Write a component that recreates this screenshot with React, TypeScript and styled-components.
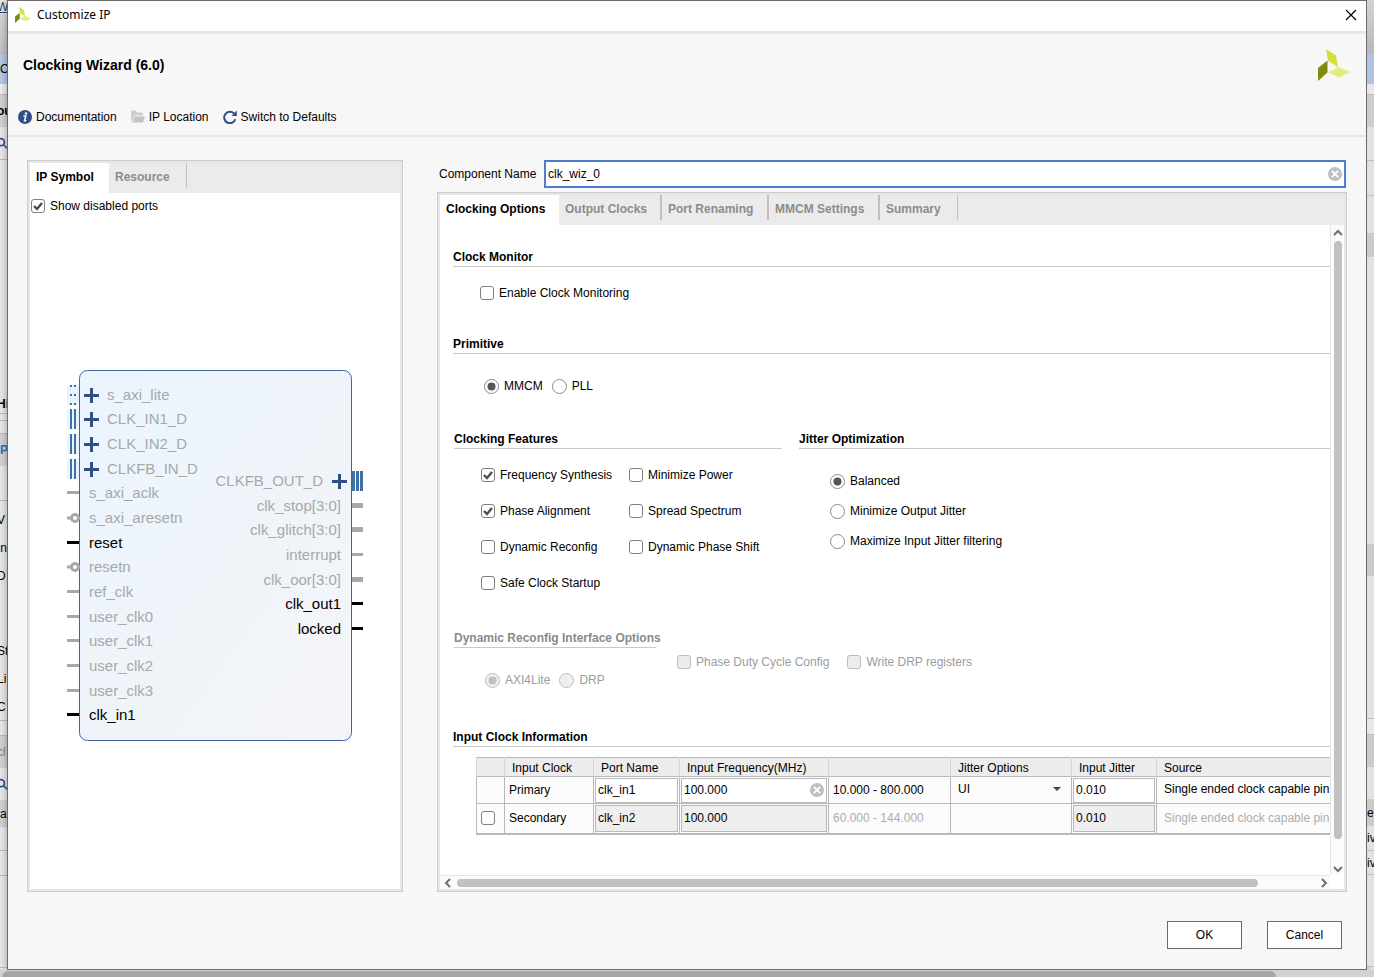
import React, { useState } from 'react';
import styled, { createGlobalStyle, css } from 'styled-components';

const GlobalStyle = createGlobalStyle`
  * { box-sizing: border-box; }
  body {
    margin: 0;
    background: #e4e4e4;
    color: #000;
    font: 12px/18px "Liberation Sans", Arial, sans-serif;
  }
  button, input, select { font: inherit; color: inherit; }
`;

/* ---------- window behind the dialog ---------- */

const Desktop = styled.div`
  display: grid;
  grid-template-columns: 7px minmax(0, 1fr) 7px;
  grid-template-rows: 1fr 7px;
  min-height: 100vh;
  overflow: hidden;
`;

const Strip = styled.div`
  display: flex;
  flex-direction: column;
  min-width: 0;
  overflow: hidden;
`;

const BandBox = styled.div<{
  $h: number;
  $bg?: string;
  $line?: boolean;
  $bold?: boolean;
  $color?: string;
  $cut?: boolean;
  $link?: boolean;
}>`
  display: flex;
  align-items: center;
  flex: none;
  height: ${(p) => p.$h}px;
  overflow: hidden;
  white-space: nowrap;
  text-indent: ${(p) => (p.$cut ? -3 : 0)}px;
  text-decoration: ${(p) => (p.$link ? 'underline' : 'none')};
  background: ${(p) => p.$bg || '#e9e9e9'};
  border-bottom: ${(p) => (p.$line ? '1px solid #bdbdbd' : '0')};
  font-weight: ${(p) => (p.$bold ? 700 : 400)};
  color: ${(p) => p.$color || '#000'};
`;

const BottomStrip = styled.div`
  grid-column: 1 / -1;
  padding: 1px 98px 0 2px;
  background: #d2d2d2;
  overflow: hidden;
`;

const BottomThumb = styled.div`
  height: 12px;
  border-radius: 6px;
  background: #a6a6a6;
`;

type Band = {
  h: number;
  bg?: string;
  line?: boolean;
  text?: string;
  bold?: boolean;
  color?: string;
  icon?: boolean;
  cut?: boolean;
  link?: boolean;
};

const grey = '#d3d3d3';

const leftBands: Band[] = [
  { h: 14, text: 'W', color: '#2a3f6b', cut: true, link: true },
  { h: 40, bg: 'linear-gradient(#d6d6d6, #c2c2c2)', line: true },
  { h: 30, bg: '#b9c9e6', text: 'C' },
  { h: 11, bg: '#efefef', line: true },
  { h: 32, bg: grey, text: 'ou', bold: true, cut: true },
  { h: 33, icon: true, line: true },
  { h: 234 },
  { h: 20, text: 'Hi', bold: true, line: true, cut: true },
  { h: 7, line: true },
  { h: 13, line: true },
  { h: 32, bg: grey, text: 'P', bold: true, color: '#2a70b8' },
  { h: 35, line: true },
  { h: 5 },
  { h: 28, text: 'V', cut: true },
  { h: 28, text: 'In', cut: true },
  { h: 28, text: 'D', cut: true },
  { h: 47 },
  { h: 28, text: 'St', cut: true },
  { h: 28, text: 'Li', cut: true },
  { h: 28, text: 'C', cut: true, line: true },
  { h: 15, line: true },
  { h: 32, bg: grey, text: 'cl', color: '#888', cut: true },
  { h: 32, icon: true },
  { h: 27, bg: grey, text: 'a' },
  { h: 24, line: true },
  { h: 25, line: true },
  { h: 92, line: true },
];

const rightBands: Band[] = [
  { h: 54, bg: 'linear-gradient(#d4d4d4, #b8b8b8)', line: true },
  { h: 30, bg: '#b0c2e2' },
  { h: 11, bg: '#e8e8e8', line: true },
  { h: 32, bg: '#cdcdcd' },
  { h: 34, bg: '#e2e2e2', line: true },
  { h: 35, bg: '#e2e2e2', line: true },
  { h: 37, bg: '#e2e2e2' },
  { h: 24, bg: '#cbcbcb' },
  { h: 287, bg: '#e2e2e2' },
  { h: 32, bg: '#cbcbcb' },
  { h: 143, bg: '#e2e2e2', line: true },
  { h: 16, bg: '#e9e9e9', line: true },
  { h: 32, bg: '#cbcbcb' },
  { h: 32, bg: '#e2e2e2' },
  { h: 27, bg: '#cbcbcb', text: 'e' },
  { h: 25, bg: '#e2e2e2', text: 'iv', line: true },
  { h: 24, bg: '#e2e2e2', text: 'iv', line: true },
  { h: 92, bg: '#e2e2e2', line: true },
];

const SearchGlyph = () => (
  <svg width="8" height="14" viewBox="0 0 8 14" aria-hidden="true">
    <circle cx="1" cy="6" r="4" fill="none" stroke="#34548a" strokeWidth="2" />
    <path d="M4 9l4 4" stroke="#34548a" strokeWidth="2" />
  </svg>
);

const Bands = ({ items }: { items: Band[] }) => (
  <Strip>
    {items.map((b, i) => (
      <BandBox key={i} $h={b.h} $bg={b.bg} $line={b.line} $bold={b.bold} $color={b.color} $cut={b.cut} $link={b.link}>
        {b.icon ? <SearchGlyph /> : b.text}
      </BandBox>
    ))}
  </Strip>
);

/* ---------- dialog frame ---------- */

const Dialog = styled.main`
  display: flex;
  flex-direction: column;
  min-width: 0;
  background: #f7f7f7;
  border: 1px solid #6c6c6c;
  box-shadow: 0 0 8px rgba(0, 0, 0, 0.35);
`;

const TitleBar = styled.div`
  display: flex;
  align-items: center;
  gap: 6px;
  height: 33px;
  padding: 0 7px 2px;
  background: #fff;
  border-bottom: 3px solid #e6e6e6;
  font-family: "Noto Sans", "Open Sans", sans-serif;
`;

const CloseButton = styled.button`
  display: flex;
  margin-left: auto;
  padding: 2px;
  border: 0;
  background: none;
`;

const Header = styled.header`
  padding: 15px 16px 8px 10px;
  border-bottom: 2px solid #e6e6e6;
`;

const HeaderTop = styled.div`
  display: flex;
  align-items: center;
  justify-content: space-between;
  padding-left: 5px;
`;

const Title = styled.h1`
  margin: 0;
  font-size: 14px;
  font-weight: 700;
`;

const Toolbar = styled.div`
  display: flex;
  gap: 14px;
  margin-top: 26px;
`;

const ToolButton = styled.button`
  display: flex;
  align-items: center;
  gap: 4px;
  height: 20px;
  padding: 0;
  border: 0;
  background: none;
`;

const Body = styled.div`
  display: flex;
  flex: 1;
  gap: 34px;
  padding: 23px 19px 0;
`;

const Footer = styled.footer`
  display: flex;
  justify-content: flex-end;
  gap: 25px;
  padding: 29px 24px 20px;
`;

const DialogButton = styled.button`
  width: 75px;
  height: 28px;
  padding: 0;
  border: 1px solid #6a6a6a;
  background: #fff;
`;

/* ---------- panels and tabs ---------- */

const Panel = styled.section`
  display: flex;
  flex-direction: column;
  min-width: 0;
  padding: 2px;
  border: 1px solid #cdcdcd;
  background: #e6e6e6;
`;

const SymbolPanel = styled(Panel)`
  flex: 0 0 376px;
`;

const OptionsPanel = styled(Panel)`
  flex: 1;
`;

const PanelFill = styled.div`
  flex: 1;
  min-width: 0;
  background: #fff;
`;

const TabBar = styled.div`
  display: flex;
  height: 30px;
  background: #ebebeb;
`;

const Tab = styled.button<{ $w: number; $active?: boolean; $rule?: number }>`
  width: ${(p) => p.$w}px;
  height: 25px;
  padding: 2px 0 0 6px;
  border: 0;
  border-right: ${(p) => p.$rule || 0}px solid #c0c0c0;
  background: none;
  color: #8c8c8c;
  font-weight: 700;
  text-align: left;
  white-space: nowrap;
  ${(p) =>
    p.$active &&
    css`
      height: 30px;
      padding-bottom: 5px;
      background: #fff;
      color: #000;
    `}
`;

const PortsToggle = styled.div`
  display: flex;
  padding: 4px 1px;
`;

const SymbolArt = styled.svg`
  display: block;
  margin: 151px 0 0 37px;
  font-size: 15px;
`;

const RightColumn = styled.div`
  display: flex;
  flex: 1;
  flex-direction: column;
  min-width: 0;
  gap: 4px;
`;

const NameRow = styled.div`
  display: flex;
  align-items: center;
  padding: 0 1px 0 2px;
`;

const NameLabel = styled.label`
  width: 105px;
`;

const NameField = styled.div`
  display: flex;
  flex: 1;
  align-items: center;
  height: 28px;
  padding-right: 2px;
  border: 2px solid #4f7bd0;
  background: #fff;
`;

const PlainInput = styled.input`
  flex: 1;
  min-width: 0;
  padding: 0 2px;
  border: 0;
  outline: 0;
  background: none;
`;

const ClearButton = styled.button`
  display: flex;
  padding: 0;
  border: 0;
  background: none;
`;

/* ---------- scroll frame ---------- */

const ScrollFrame = styled.div`
  display: grid;
  flex: 1;
  grid-template-columns: minmax(0, 1fr) 13px;
  grid-template-rows: 1fr 14px;
  padding-right: 1px;
  background: #fff;
`;

const Viewport = styled.div`
  overflow: hidden;
  padding: 23px 0 0 13px;
`;

const VBar = styled.div`
  display: flex;
  flex-direction: column;
  align-items: center;
  justify-content: space-between;
  padding: 4px 0 2px 1px;
  border-left: 1px solid #e6e6e6;
  background: #fbfbfb;
`;

const HBar = styled.div`
  display: flex;
  align-items: center;
  padding: 0 2px 0 4px;
  border-top: 1px solid #e6e6e6;
  background: #fbfbfb;
`;

const VThumb = styled.div`
  flex: 1;
  width: 8px;
  margin: 5px 0 27px;
  border-radius: 4px;
  background: #c1c1c1;
`;

const HThumb = styled.div`
  flex: 1;
  height: 8px;
  margin: 0 63px 0 6px;
  border-radius: 4px;
  background: #c1c1c1;
`;

/* ---------- form parts ---------- */

const Group = styled.section<{ $top?: number; $width?: number }>`
  margin-top: ${(p) => p.$top || 0}px;
  ${(p) => p.$width && `width: ${p.$width}px;`}
`;

const GroupTitle = styled.h2<{ $dim?: boolean }>`
  height: 19px;
  margin: 0;
  border-bottom: 1px solid #c9c9c9;
  color: ${(p) => (p.$dim ? '#8a8a8a' : '#000')};
  font-size: 12px;
  font-weight: 700;
  line-height: 18px;
  white-space: nowrap;
`;

const Columns = styled.div<{ $top: number; $gap: number }>`
  display: flex;
  align-items: flex-start;
  gap: ${(p) => p.$gap}px;
  margin-top: ${(p) => p.$top}px;
  padding-left: 1px;
`;

const Grow = styled.section`
  flex: 1;
  min-width: 0;
`;

const Row = styled.div<{ $top?: number; $left?: number; $gap?: number }>`
  display: flex;
  align-items: center;
  gap: ${(p) => p.$gap || 0}px;
  height: 36px;
  margin-top: ${(p) => p.$top || 0}px;
  padding-left: ${(p) => p.$left || 0}px;
`;

const FeatureGrid = styled.div`
  display: grid;
  grid-template-columns: 148px auto;
  grid-auto-rows: 36px;
  align-items: center;
  padding: 8px 0 0 27px;
`;

const RadioStack = styled.div`
  display: grid;
  grid-auto-rows: 30px;
  align-items: center;
  padding: 17px 0 0 31px;
`;

const ChoiceLabel = styled.label<{ $dim?: boolean }>`
  display: inline-flex;
  align-items: center;
  gap: 5px;
  color: ${(p) => (p.$dim ? '#9c9c9c' : '#000')};
  white-space: nowrap;
`;

const Mark = styled.span`
  display: grid;
  > * { grid-area: 1 / 1; }
  > svg { visibility: hidden; pointer-events: none; }
  > input:checked + svg { visibility: visible; }
`;

const CheckInput = styled.input`
  appearance: none;
  width: 14px;
  height: 14px;
  margin: 0;
  border: 1px solid #808080;
  border-radius: 3px;
  background: #fff;
  &:disabled { border-color: #bcbcbc; background: #ececec; }
`;

const RadioInput = styled.input`
  appearance: none;
  width: 15px;
  height: 15px;
  margin: 0;
  border: 1px solid #8a8a8a;
  border-radius: 50%;
  background: #fff;
  & + svg { color: #555; }
  &:disabled { border-color: #bcbcbc; background: #efefef; }
  &:disabled + svg { color: #c0c0c0; }
`;

type ChoiceProps = { label: string; on?: boolean; disabled?: boolean };

const Check = ({ label, on, disabled }: ChoiceProps) => (
  <ChoiceLabel $dim={disabled}>
    <Mark>
      <CheckInput type="checkbox" defaultChecked={on} disabled={disabled} />
      <svg width="14" height="14" viewBox="0 0 14 14" aria-hidden="true">
        <path d="M3 7l3 3 5-6" fill="none" stroke="#4d4d4d" strokeWidth="2.4" />
      </svg>
    </Mark>
    {label}
  </ChoiceLabel>
);

const Radio = ({ label, on, disabled, name }: ChoiceProps & { name: string }) => (
  <ChoiceLabel $dim={disabled}>
    <Mark>
      <RadioInput type="radio" name={name} defaultChecked={on} disabled={disabled} />
      <svg width="15" height="15" viewBox="0 0 15 15" aria-hidden="true">
        <circle cx="7.5" cy="7.5" r="4" fill="currentColor" />
      </svg>
    </Mark>
    {label}
  </ChoiceLabel>
);

/* ---------- clock table ---------- */

const ClockTable = styled.table`
  width: 946px;
  margin: 10px 0 0 23px;
  border-collapse: collapse;
  border: 1px solid #b9b9b9;
  border-bottom-width: 2px;
  table-layout: fixed;
`;

const HeadCell = styled.th`
  height: 18px;
  padding: 3px 0 0 7px;
  border: solid #d6d6d6;
  border-width: 0 1px;
  background: #ececec;
  font-weight: 400;
  line-height: 15px;
  text-align: left;
  white-space: nowrap;
`;

const Cell = styled.td<{ $pad?: number; $dim?: boolean; $raise?: boolean }>`
  padding: 0 0 0 ${(p) => (p.$pad === undefined ? 4 : p.$pad)}px;
  border: 1px solid #b9b9b9;
  background: #fcfcfc;
  color: ${(p) => (p.$dim ? '#adadad' : '#000')};
  white-space: nowrap;
  ${(p) => p.$raise && 'padding-bottom: 3px;'}
`;

const BodyRow = styled.tr<{ $h: number }>`
  height: ${(p) => p.$h}px;
`;

const CellField = styled.div<{ $off?: boolean }>`
  display: flex;
  align-items: center;
  height: ${(p) => (p.$off ? 27 : 25)}px;
  margin: 0 1px;
  padding-right: 2px;
  border: 1px solid #b9b9b9;
  background: ${(p) => (p.$off ? '#eee' : '#fff')};
  input:disabled { color: #000; }
`;

const JitterBox = styled.div`
  display: flex;
  align-items: center;
  padding-right: 10px;
  margin-bottom: 3px;
`;

const JitterSelect = styled.select`
  appearance: none;
  flex: 1;
  padding: 0;
  border: 0;
  outline: 0;
  background: none;
`;

const ClearIcon = () => (
  <svg width="14" height="14" viewBox="0 0 14 14" aria-hidden="true">
    <circle cx="7" cy="7" r="7" fill="#bfbfbf" />
    <path d="M3.8 3.8l6.4 6.4M10.2 3.8l-6.4 6.4" stroke="#fff" strokeWidth="1.8" />
  </svg>
);

const Chevron = ({ d, w, h }: { d: string; w: number; h: number }) => (
  <svg width={w} height={h} viewBox={`0 0 ${w} ${h}`} aria-hidden="true">
    <path d={d} fill="none" stroke="#707070" strokeWidth="2" />
  </svg>
);

const Logo = ({ size }: { size: number }) => (
  <svg width={size} height={size} viewBox="0 0 32 32" aria-hidden="true">
    <path d="M8 0l10 6.500 2 12L10 11.500z" fill="#d4e03a" />
    <path d="M0 19l9.500-7.500v12L0 32z" fill="#808a0c" />
    <path d="M10 23.500l10.500-5.500L32 23l-10.500 5.500z" fill="#e4eb80" />
  </svg>
);

/* ---------- IP block symbol ---------- */

type Port = { y: number; name: string; kind?: 'dots' | 'bars' | 'inv' | 'bus'; on?: boolean };

const leftPorts: Port[] = [
  { y: 25, name: 's_axi_lite', kind: 'dots' },
  { y: 49, name: 'CLK_IN1_D', kind: 'bars' },
  { y: 74, name: 'CLK_IN2_D', kind: 'bars' },
  { y: 99, name: 'CLKFB_IN_D', kind: 'bars' },
  { y: 123, name: 's_axi_aclk' },
  { y: 148, name: 's_axi_aresetn', kind: 'inv' },
  { y: 173, name: 'reset', on: true },
  { y: 197, name: 'resetn', kind: 'inv' },
  { y: 222, name: 'ref_clk' },
  { y: 247, name: 'user_clk0' },
  { y: 271, name: 'user_clk1' },
  { y: 296, name: 'user_clk2' },
  { y: 321, name: 'user_clk3' },
  { y: 345, name: 'clk_in1', on: true },
];

const rightPorts: Port[] = [
  { y: 111, name: 'CLKFB_OUT_D', kind: 'bars' },
  { y: 136, name: 'clk_stop[3:0]', kind: 'bus' },
  { y: 160, name: 'clk_glitch[3:0]', kind: 'bus' },
  { y: 185, name: 'interrupt' },
  { y: 210, name: 'clk_oor[3:0]', kind: 'bus' },
  { y: 234, name: 'clk_out1', on: true },
  { y: 259, name: 'locked', on: true },
];

const Plus = ({ x, y }: { x: number; y: number }) => (
  <path d={`M${x - 7.5} ${y}h15M${x} ${y - 7.5}v15`} stroke="#2f4f8a" strokeWidth="3" />
);

const IpSymbol = () => (
  <SymbolArt width="297" height="371" viewBox="0 0 297 371" role="img" aria-label="IP symbol">
    <defs>
      <linearGradient id="block" x1="0" y1="0" x2="1" y2="1">
        <stop offset="0" stopColor="#ebf5fe" />
        <stop offset="0.5" stopColor="#eff4fa" />
        <stop offset="1" stopColor="#f4f5f7" />
      </linearGradient>
    </defs>
    <rect x="12.5" y="0.5" width="272" height="370" rx="8" fill="url(#block)" stroke="#41649f" />
    {leftPorts.map((p) => {
      const iface = p.kind === 'dots' || p.kind === 'bars';
      const ink = p.on ? '#000' : '#a8a8a8';
      return (
        <g key={p.name}>
          {iface && <rect x="0" y={p.y - 10} width="12" height="20" fill="#e8f3fd" />}
          {iface && (
            <path
              d={`M4 ${p.y - 10}v20M8 ${p.y - 10}v20`}
              stroke="#3f6fa3"
              strokeWidth="2"
              strokeDasharray={p.kind === 'dots' ? '2 7' : undefined}
            />
          )}
          {iface && <Plus x={24.5} y={p.y + 0.5} />}
          {p.kind === 'inv' && <path d={`M0 ${p.y}h4`} stroke={ink} strokeWidth="3" />}
          {p.kind === 'inv' && <circle cx="8" cy={p.y} r="3.5" fill="#fff" stroke={ink} strokeWidth="3" />}
          {!p.kind && <path d={`M0 ${p.y - 0.5}h12`} stroke={ink} strokeWidth="3" />}
          <text x={iface ? 40 : 22} y={p.y + 5} fill={ink}>
            {p.name}
          </text>
        </g>
      );
    })}
    {rightPorts.map((p) => {
      const ink = p.on ? '#000' : '#a8a8a8';
      return (
        <g key={p.name}>
          {p.kind === 'bars' ? (
            <>
              <path
                d={`M286.500 ${p.y - 10}v20M290.500 ${p.y - 10}v20M294.500 ${p.y - 10}v20`}
                stroke="#3f6fa3"
                strokeWidth="3"
              />
              <Plus x={272.5} y={p.y + 0.5} />
            </>
          ) : (
            <path d={`M285 ${p.y - 0.5}h11`} stroke={ink} strokeWidth={p.kind === 'bus' ? 5 : 3} />
          )}
          <text x={p.kind === 'bars' ? 256 : 274} y={p.y + 5} fill={ink} textAnchor="end">
            {p.name}
          </text>
        </g>
      );
    })}
  </SymbolArt>
);

const tabs = [
  { label: 'Clocking Options', w: 119, rule: 0 },
  { label: 'Output Clocks', w: 103, rule: 2 },
  { label: 'Port Renaming', w: 107, rule: 2 },
  { label: 'MMCM Settings', w: 111, rule: 2 },
  { label: 'Summary', w: 78, rule: 1 },
];

export default function App() {
  const [name, setName] = useState('clk_wiz_0');
  const [freq, setFreq] = useState('100.000');

  return (
    <>
      <GlobalStyle />
      <Desktop>
        <Bands items={leftBands} />
        <Dialog>
          <TitleBar>
            <Logo size={16} />
            Customize IP
            <CloseButton aria-label="Close">
              <svg width="12" height="12" viewBox="0 0 12 12" aria-hidden="true">
                <path d="M1 1l10 10M11 1L1 11" stroke="#000" strokeWidth="1.2" />
              </svg>
            </CloseButton>
          </TitleBar>

          <Header>
            <HeaderTop>
              <Title>Clocking Wizard (6.0)</Title>
              <Logo size={32} />
            </HeaderTop>
            <Toolbar>
              <ToolButton>
                <svg width="14" height="14" viewBox="0 0 14 14" aria-hidden="true">
                  <circle cx="7" cy="7" r="7" fill="#2f4f86" />
                  <circle cx="8" cy="3.500" r="1.200" fill="#fff" />
                  <path d="M5.500 6h2.300L6.500 10.800h1.800" fill="none" stroke="#fff" strokeWidth="1.500" />
                </svg>
                Documentation
              </ToolButton>
              <ToolButton>
                <svg width="14" height="14" viewBox="0 0 14 14" aria-hidden="true">
                  <path d="M0 11.500V1.500l1-1h4l1 2h5l1 1v2H4L1.500 10z" fill="#cfcfcf" />
                  <path d="M4 6.500H14L12 12.500H1z" fill="#c4c4c4" />
                </svg>
                IP Location
              </ToolButton>
              <ToolButton>
                <svg width="14" height="14" viewBox="0 0 14 14" aria-hidden="true">
                  <path d="M11 3.500A5.700 5.700 0 1 0 12.300 9.300" fill="none" stroke="#2f4f86" strokeWidth="2" />
                  <path d="M13.800 0.500V6H8.500z" fill="#2f4f86" />
                </svg>
                Switch to Defaults
              </ToolButton>
            </Toolbar>
          </Header>

          <Body>
            <SymbolPanel>
              <TabBar>
                <Tab $w={79} $active>IP Symbol</Tab>
                <Tab $w={78} $rule={1}>Resource</Tab>
              </TabBar>
              <PanelFill>
                <PortsToggle>
                  <Check label="Show disabled ports" on />
                </PortsToggle>
                <IpSymbol />
              </PanelFill>
            </SymbolPanel>

            <RightColumn>
              <NameRow>
                <NameLabel htmlFor="component-name">Component Name</NameLabel>
                <NameField>
                  <PlainInput id="component-name" value={name} onChange={(e) => setName(e.target.value)} />
                  <ClearButton aria-label="Clear name" onClick={() => setName('')}>
                    <ClearIcon />
                  </ClearButton>
                </NameField>
              </NameRow>

              <OptionsPanel>
                <TabBar>
                  {tabs.map((t, i) => (
                    <Tab key={t.label} $w={t.w} $rule={t.rule} $active={i === 0}>
                      {t.label}
                    </Tab>
                  ))}
                </TabBar>
                <ScrollFrame>
                  <Viewport>
                    <Group>
                      <GroupTitle>Clock Monitor</GroupTitle>
                      <Row $top={8} $left={27}>
                        <Check label="Enable Clock Monitoring" />
                      </Row>
                    </Group>

                    <Group $top={24}>
                      <GroupTitle>Primitive</GroupTitle>
                      <Row $top={14} $left={31} $gap={9}>
                        <Radio name="primitive" label="MMCM" on />
                        <Radio name="primitive" label="PLL" />
                      </Row>
                    </Group>

                    <Columns $top={26} $gap={17}>
                      <Group $width={328}>
                        <GroupTitle>Clocking Features</GroupTitle>
                        <FeatureGrid>
                          <Check label="Frequency Synthesis" on />
                          <Check label="Minimize Power" />
                          <Check label="Phase Alignment" on />
                          <Check label="Spread Spectrum" />
                          <Check label="Dynamic Reconfig" />
                          <Check label="Dynamic Phase Shift" />
                          <Check label="Safe Clock Startup" />
                        </FeatureGrid>
                      </Group>
                      <Grow>
                        <GroupTitle>Jitter Optimization</GroupTitle>
                        <RadioStack>
                          <Radio name="jitter" label="Balanced" on />
                          <Radio name="jitter" label="Minimize Output Jitter" />
                          <Radio name="jitter" label="Maximize Input Jitter filtering" />
                        </RadioStack>
                      </Grow>
                    </Columns>

                    <Columns $top={28} $gap={21}>
                      <Group $width={202}>
                        <GroupTitle $dim>Dynamic Reconfig Interface Options</GroupTitle>
                        <Row $top={14} $left={31} $gap={9}>
                          <Radio name="drp" label="AXI4Lite" on disabled />
                          <Radio name="drp" label="DRP" disabled />
                        </Row>
                      </Group>
                      <Row $top={15} $gap={18}>
                        <Check label="Phase Duty Cycle Config" disabled />
                        <Check label="Write DRP registers" disabled />
                      </Row>
                    </Columns>

                    <Group $top={30}>
                      <GroupTitle>Input Clock Information</GroupTitle>
                      <ClockTable>
                        <colgroup>
                          <col width="28" />
                          <col width="89" />
                          <col width="86" />
                          <col width="149" />
                          <col width="122" />
                          <col width="121" />
                          <col width="85" />
                          <col />
                        </colgroup>
                        <thead>
                          <tr>
                            {['', 'Input Clock', 'Port Name', 'Input Frequency(MHz)', '', 'Jitter Options', 'Input Jitter', 'Source'].map(
                              (h, i) => (
                                <HeadCell key={i}>{h}</HeadCell>
                              ),
                            )}
                          </tr>
                        </thead>
                        <tbody>
                          <BodyRow $h={27}>
                            <Cell />
                            <Cell>Primary</Cell>
                            <Cell $pad={0}>
                              <CellField>
                                <PlainInput aria-label="Primary port name" defaultValue="clk_in1" />
                              </CellField>
                            </Cell>
                            <Cell $pad={0}>
                              <CellField>
                                <PlainInput
                                  aria-label="Primary input frequency"
                                  value={freq}
                                  onChange={(e) => setFreq(e.target.value)}
                                />
                                <ClearButton aria-label="Clear frequency" onClick={() => setFreq('')}>
                                  <ClearIcon />
                                </ClearButton>
                              </CellField>
                            </Cell>
                            <Cell>10.000 - 800.000</Cell>
                            <Cell $pad={7}>
                              <JitterBox>
                                <JitterSelect aria-label="Jitter options" defaultValue="UI">
                                  <option>UI</option>
                                  <option>PS</option>
                                </JitterSelect>
                                <svg width="8" height="4" viewBox="0 0 8 4" aria-hidden="true">
                                  <path d="M0 0h8L4 4z" fill="#444" />
                                </svg>
                              </JitterBox>
                            </Cell>
                            <Cell $pad={0}>
                              <CellField>
                                <PlainInput aria-label="Primary input jitter" defaultValue="0.010" />
                              </CellField>
                            </Cell>
                            <Cell $pad={7} $raise>Single ended clock capable pin</Cell>
                          </BodyRow>
                          <BodyRow $h={30}>
                            <Cell $pad={4}>
                              <Mark>
                                <CheckInput type="checkbox" aria-label="Enable secondary clock" />
                              </Mark>
                            </Cell>
                            <Cell>Secondary</Cell>
                            <Cell $pad={0}>
                              <CellField $off>
                                <PlainInput aria-label="Secondary port name" defaultValue="clk_in2" disabled />
                              </CellField>
                            </Cell>
                            <Cell $pad={0}>
                              <CellField $off>
                                <PlainInput aria-label="Secondary input frequency" defaultValue="100.000" disabled />
                              </CellField>
                            </Cell>
                            <Cell $dim>60.000 - 144.000</Cell>
                            <Cell />
                            <Cell $pad={0}>
                              <CellField $off>
                                <PlainInput aria-label="Secondary input jitter" defaultValue="0.010" disabled />
                              </CellField>
                            </Cell>
                            <Cell $pad={7} $dim>Single ended clock capable pin</Cell>
                          </BodyRow>
                        </tbody>
                      </ClockTable>
                    </Group>
                  </Viewport>
                  <VBar>
                    <Chevron w={10} h={7} d="M1 6l4-4 4 4" />
                    <VThumb />
                    <Chevron w={10} h={7} d="M1 1l4 4 4-4" />
                  </VBar>
                  <HBar>
                    <Chevron w={7} h={10} d="M6 1L2 5l4 4" />
                    <HThumb />
                    <Chevron w={7} h={10} d="M1 1l4 4-4 4" />
                  </HBar>
                </ScrollFrame>
              </OptionsPanel>
            </RightColumn>
          </Body>

          <Footer>
            <DialogButton>OK</DialogButton>
            <DialogButton>Cancel</DialogButton>
          </Footer>
        </Dialog>
        <Bands items={rightBands} />
        <BottomStrip>
          <BottomThumb />
        </BottomStrip>
      </Desktop>
    </>
  );
}
